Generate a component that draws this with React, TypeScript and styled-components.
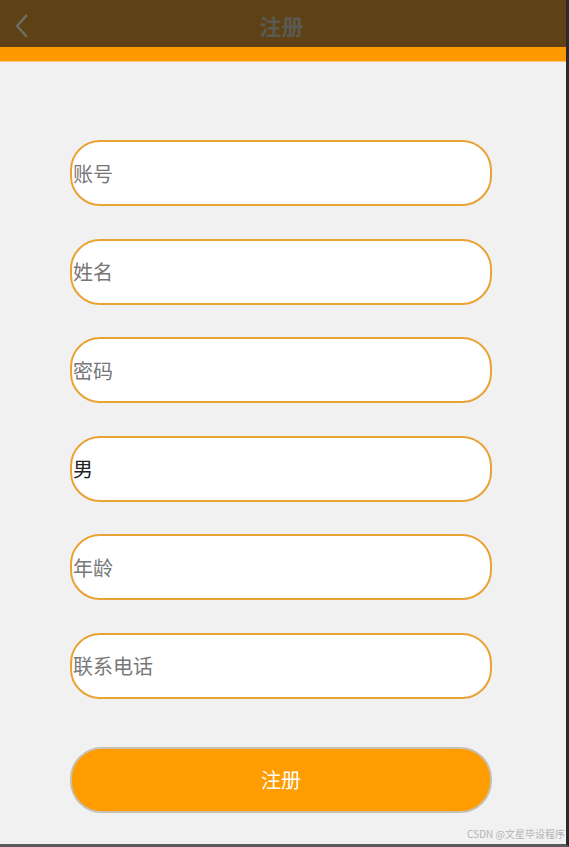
import React from 'react';
import styled, { createGlobalStyle } from 'styled-components';

const GlobalStyle = createGlobalStyle`
  html, body {
    margin: 0;
    padding: 0;
    background: #f1f1f1;
  }
  body {
    font-family: "Noto Sans CJK SC", "Noto Sans", sans-serif;
  }
  * {
    box-sizing: border-box;
  }
`;

const Page = styled.div`
  width: 569px;
  height: 847px;
  display: flex;
  flex-direction: column;
  background: #f1f1f1;
  border-bottom: 3px solid #5a5a5a;
  border-right: 3px solid #2a2a2a;
  position: relative;
`;

const Header = styled.header`
  height: 47px;
  padding-top: 3px;
  background: #5e4216;
  display: flex;
  align-items: center;
  justify-content: center;
  padding-right: 3px;
  position: relative;
`;

const BackButton = styled.button`
  position: absolute;
  left: 10px;
  top: 11px;
  width: 24px;
  height: 30px;
  padding: 0;
  border: none;
  background: transparent;
  display: flex;
  align-items: center;
  justify-content: center;
`;

const Title = styled.h1`
  margin: 0;
  font-size: 22px;
  font-weight: 700;
  color: #5a5a52;
`;

const AccentBar = styled.div`
  height: 15px;
  background: #ff9900;
  border-bottom: 1px solid #f7c97a;
`;

const Form = styled.form`
  display: flex;
  flex-direction: column;
  align-items: flex-start;
  padding: 78px 0 0 70px;
`;

const Field = styled.input<{ $filled?: boolean }>`
  width: 422px;
  height: 66px;
  margin-bottom: 32.6px;
  padding: 0 0 0 1px;
  border: 2.5px solid #eaa235;
  border-radius: 30px;
  background: #fff;
  font-family: "Noto Sans CJK SC", "Noto Sans", sans-serif;
  font-size: 20px;
  color: ${p => (p.$filled ? '#222' : '#777')};
  outline: none;

  &::placeholder {
    color: #777;
  }
`;

const SubmitButton = styled.button`
  width: 422px;
  height: 66px;
  margin-top: 15px;
  border: 2px solid #c8bfb0;
  border-radius: 32px;
  background: #ff9c00;
  color: #fff;
  font-family: "Noto Sans CJK SC", "Noto Sans", sans-serif;
  font-size: 20px;
`;

const Watermark = styled.div`
  position: absolute;
  right: 1px;
  bottom: 3px;
  font-size: 10px;
  color: #b4b4b4;
  font-family: "Noto Sans CJK SC", "Noto Sans", sans-serif;
`;

const App: React.FC = () => {
  return (
    <>
      <GlobalStyle />
      <Page>
        <Header>
          <BackButton type="button" aria-label="返回">
            <svg width="16" height="26" viewBox="0 0 16 26" fill="none">
              <path d="M13 2 L3 13 L13 24" stroke="#6e6e6a" strokeWidth="2.4" />
            </svg>
          </BackButton>
          <Title>注册</Title>
        </Header>
        <AccentBar />
        <Form onSubmit={e => e.preventDefault()}>
          <Field placeholder="账号" />
          <Field placeholder="姓名" />
          <Field placeholder="密码" type="password" />
          <Field defaultValue="男" $filled />
          <Field placeholder="年龄" />
          <Field placeholder="联系电话" />
          <SubmitButton type="submit">注册</SubmitButton>
        </Form>
        <Watermark>CSDN @文星毕设程序</Watermark>
      </Page>
    </>
  );
};

export default App;
